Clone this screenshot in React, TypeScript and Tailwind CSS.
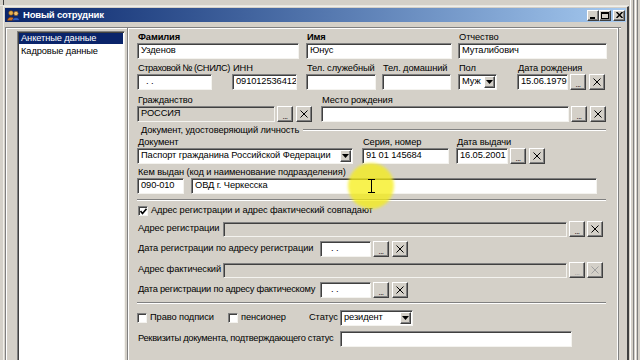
import React from "react";

const sunken =
  "border border-t-[#808080] border-l-[#808080] border-b-[#f4f3ef] border-r-[#f4f3ef] shadow-[inset_1px_1px_0_#404040]";
const raised =
  "border border-t-white border-l-white border-b-[#404040] border-r-[#404040] shadow-[inset_-1px_-1px_0_#808080] bg-[#d4d0c8]";

function Field({
  className,
  value,
  gray,
}: {
  className: string;
  value?: string;
  gray?: boolean;
}) {
  return (
    <div
      className={`${sunken} ${gray ? "bg-[#d4d0c8]" : "bg-white"} ${className} shrink-0 flex items-center pl-[3px] whitespace-nowrap overflow-hidden leading-none`}
    >
      {value}
    </div>
  );
}

function Btn({
  children,
  disabled,
}: {
  children: React.ReactNode;
  disabled?: boolean;
}) {
  return (
    <div
      className={`${raised} w-[16px] h-[16px] shrink-0 flex items-center justify-center leading-none ${disabled ? "text-[#a0a0a0]" : "text-black"}`}
    >
      {children}
    </div>
  );
}

function Dots({ disabled }: { disabled?: boolean }) {
  return (
    <Btn disabled={disabled}>
      <span className="text-[8px] mt-[5px] tracking-[-0.5px]">...</span>
    </Btn>
  );
}

function Cross({ disabled }: { disabled?: boolean }) {
  return (
    <Btn disabled={disabled}>
      <svg width="8" height="8" viewBox="0 0 8 8">
        <path
          d="M0.5 0.5 L7.5 7.5 M7.5 0.5 L0.5 7.5"
          stroke={disabled ? "#a0a0a0" : "#000"}
          strokeWidth="1"
        />
      </svg>
    </Btn>
  );
}

function Pick({ disabled }: { disabled?: boolean }) {
  return (
    <div className="flex">
      <div className="ml-[2px]">
        <Dots disabled={disabled} />
      </div>
      <div className="ml-[3px]">
        <Cross disabled={disabled} />
      </div>
    </div>
  );
}

function Select({ className, value }: { className: string; value: string }) {
  return (
    <div
      className={`${sunken} bg-white ${className} shrink-0 flex items-center justify-between pl-[3px] pr-[1px] whitespace-nowrap overflow-hidden leading-none`}
    >
      <span>{value}</span>
      <div className={`${raised} w-[11px] h-[12px] shrink-0 flex items-center justify-center`}>
        <svg width="7" height="4" viewBox="0 0 7 4">
          <path d="M0 0 H7 L3.5 4 Z" fill="#000" />
        </svg>
      </div>
    </div>
  );
}

function Check({ on }: { on?: boolean }) {
  return (
    <div className={`${sunken} bg-white w-[10px] h-[10px] shrink-0 flex items-center justify-center`}>
      {on && (
        <svg width="7" height="7" viewBox="0 0 7 7">
          <path d="M0.5 3 L2.5 5.5 L6.5 0.8" stroke="#000" strokeWidth="1.6" fill="none" />
        </svg>
      )}
    </div>
  );
}

function Label({
  children,
  bold,
  className,
}: {
  children: React.ReactNode;
  bold?: boolean;
  className?: string;
}) {
  return (
    <div className={`h-[12px] leading-[12px] whitespace-nowrap pl-[1px] ${bold ? "font-bold" : ""} ${className ?? ""}`}>
      {children}
    </div>
  );
}

function Etched({ className }: { className: string }) {
  return <div className={`h-[2px] shrink-0 border-t border-t-[#808080] border-b border-b-white ${className}`} />;
}

function TitleIcon() {
  return (
    <svg width="13" height="11" viewBox="0 0 13 11">
      <circle cx="4" cy="3" r="2.3" fill="#e8b048" stroke="#7a4a10" strokeWidth="0.6" />
      <path d="M0.5 10.5 C0.5 6 7.5 6 7.5 10.5 Z" fill="#d07020" stroke="#6a3a10" strokeWidth="0.6" />
      <circle cx="9" cy="3.5" r="2.2" fill="#f0c070" stroke="#7a4a10" strokeWidth="0.6" />
      <path d="M5.5 10.5 C5.5 6.5 12.5 6.5 12.5 10.5 Z" fill="#3060c0" stroke="#102060" strokeWidth="0.6" />
    </svg>
  );
}

function CapButton({ children, className }: { children: React.ReactNode; className?: string }) {
  return (
    <div className={`${raised} w-[12px] h-[11px] flex items-center justify-center ${className ?? ""}`}>
      {children}
    </div>
  );
}

export default function App() {
  return (
    <div className="w-[640px] h-[360px] bg-[#d4d0c8] overflow-hidden relative flex font-['Liberation_Sans',Arial,sans-serif] text-[9.3px] tracking-[-0.1px] text-black">
      <div className="w-[629px] h-[360px] flex flex-col overflow-hidden">
        <div className="h-[6px] shrink-0 border-b border-b-[#e8e6e0] flex">
          <div className="ml-[3px] w-[1px] bg-[#404040]" />
        </div>
        <div className="flex-1 min-h-0 ml-[3px] border-l border-l-[#f0efea] border-t border-t-[#f0efea] border-r-2 border-r-[#404040] px-[1px] pt-[1px] flex flex-col">
          {/* title bar */}
          <div className="h-[14px] shrink-0 bg-gradient-to-r from-[#0a246a] to-[#a6caf0] flex items-center pl-[2px] pr-[1px]">
            <TitleIcon />
            <div className="ml-[3px] text-white font-bold text-[9.5px] tracking-[-0.2px] leading-none">Новый сотрудник</div>
            <div className="ml-auto flex">
              <CapButton>
                <div className="w-[5px] h-[2px] bg-black mt-[5px] mr-[1px]" />
              </CapButton>
              <CapButton>
                <div className="w-[8px] h-[7px] border border-black border-t-2" />
              </CapButton>
              <CapButton className="ml-[2px]">
                <svg width="7" height="6" viewBox="0 0 7 6">
                  <path d="M0.5 0 L6.5 6 M6.5 0 L0.5 6" stroke="#000" strokeWidth="1.5" />
                </svg>
              </CapButton>
            </div>
          </div>

          {/* body */}
          <div className="mt-[5px] flex-1 min-h-0 mr-[5px] border-l border-t border-l-[#808080] border-t-[#808080] shadow-[inset_1px_1px_0_#fff] flex">
            {/* left list */}
            <div className="w-[121px] shrink-0 pl-[11px] pt-[3px] flex">
              <div className="w-[108px] bg-white border border-b-0 border-t-[#808080] border-l-[#808080] border-r-[#f4f3ef] shadow-[inset_1px_1px_0_#404040] pl-[1px] pt-[1px]">
                <div className="h-[11px] mr-[1px] bg-[#0a246a] text-white leading-[11px] pl-[2px] whitespace-nowrap">
                  Анкетные данные
                </div>
                <div className="h-[13px] leading-[13px] pl-[2px] mt-[1px] whitespace-nowrap">Кадровые данные</div>
              </div>
            </div>

            {/* right panel */}
            <div className="w-[492px] shrink-0 border-l border-l-[#808080] border-r border-r-[#808080] shadow-[inset_1px_0_0_#fff,inset_-1px_0_0_#fff] pl-[9px] flex flex-col">
              {/* row 1 */}
              <div className="flex mt-[3px]">
                <div className="w-[162px] flex flex-col">
                  <Label bold>Фамилия</Label>
                  <Field className="w-[162px] h-[16px]" value="Узденов" />
                </div>
                <div className="ml-[7px] w-[146px] flex flex-col">
                  <Label bold>Имя</Label>
                  <Field className="w-[146px] h-[16px]" value="Юнус" />
                </div>
                <div className="ml-[6px] w-[149px] flex flex-col">
                  <Label>Отчество</Label>
                  <Field className="w-[149px] h-[16px]" value="Муталибович" />
                </div>
              </div>

              {/* row 2 */}
              <div className="flex mt-[3px] items-end">
                <div className="w-[75px] flex flex-col">
                  <Label className="tracking-[-0.45px]">Страховой № (СНИЛС)</Label>
                  <Field className="w-[75px] h-[16px] pl-[8px]" value=" .  . " />
                </div>
                <div className="ml-[20px] w-[65px] flex flex-col">
                  <Label>ИНН</Label>
                  <Field className="w-[65px] h-[16px]" value="091012536412" />
                </div>
                <div className="ml-[9px] w-[70px] flex flex-col">
                  <Label>Тел. служебный</Label>
                  <Field className="w-[70px] h-[16px]" value="" />
                </div>
                <div className="ml-[6px] w-[69px] flex flex-col">
                  <Label>Тел. домашний</Label>
                  <Field className="w-[69px] h-[16px]" value="" />
                </div>
                <div className="ml-[7px] w-[39px] flex flex-col">
                  <Label>Пол</Label>
                  <Select className="w-[39px] h-[16px]" value="Муж" />
                </div>
                <div className="ml-[20px] flex flex-col">
                  <Label>Дата рождения</Label>
                  <div className="flex">
                    <Field className="w-[51px] h-[16px]" value="15.06.1979" />
                    <Pick />
                  </div>
                </div>
              </div>

              {/* row 3 */}
              <div className="flex mt-[4px] items-end">
                <div className="flex flex-col">
                  <Label>Гражданство</Label>
                  <div className="flex">
                    <Field className="w-[138px] h-[16px]" value="РОССИЯ" gray />
                    <Pick />
                  </div>
                </div>
                <div className="ml-[9px] flex flex-col">
                  <Label>Место рождения</Label>
                  <div className="flex">
                    <Field className="w-[248px] h-[16px]" value="" />
                    <Pick />
                  </div>
                </div>
              </div>

              {/* group caption */}
              <div className="flex items-center mt-[2px] h-[12px] shrink-0 pl-[4px] w-[469px]">
                <span className="whitespace-nowrap leading-[12px]">Документ, удостоверяющий личность</span>
                <Etched className="flex-1 ml-[4px]" />
              </div>

              {/* row 5 */}
              <div className="flex items-end">
                <div className="w-[216px] flex flex-col">
                  <Label>Документ</Label>
                  <Select className="w-[216px] h-[16px]" value="Паспорт гражданина Российской Федерации" />
                </div>
                <div className="ml-[9px] w-[87px] flex flex-col">
                  <Label>Серия, номер</Label>
                  <Field className="w-[87px] h-[16px]" value="91 01 145684" />
                </div>
                <div className="ml-[7px] flex flex-col">
                  <Label>Дата выдачи</Label>
                  <div className="flex">
                    <Field className="w-[52px] h-[16px]" value="16.05.2001" />
                    <Pick />
                  </div>
                </div>
              </div>

              {/* row 6 */}
              <div className="flex flex-col mt-[2px]">
                <Label>Кем выдан (код и наименование подразделения)</Label>
                <div className="flex">
                  <Field className="w-[47px] h-[16px]" value="090-010" />
                  <Field className="ml-[7px] w-[406px] h-[16px]" value="ОВД г. Черкесска" />
                </div>
              </div>

              <Etched className="w-[469px] mt-[5px]" />

              {/* checkbox */}
              <div className="flex items-center mt-[5px] h-[10px] shrink-0">
                <div className="ml-[1px]">
                  <Check on />
                </div>
                <span className="ml-[3px] whitespace-nowrap">Адрес регистрации и адрес фактический совпадают</span>
              </div>

              {/* address reg */}
              <div className="flex items-center mt-[5px]">
                <div className="w-[86px] whitespace-nowrap pl-[1px]">Адрес регистрации</div>
                <Field className="w-[344px] h-[15px]" value="" gray />
                <div className="flex ml-[2px]">
                  <Dots />
                  <div className="ml-[2px]">
                    <Cross />
                  </div>
                </div>
              </div>

              <div className="flex items-center mt-[4px]">
                <div className="w-[183px] whitespace-nowrap pl-[1px]">Дата регистрации по адресу регистрации</div>
                <Field className="w-[51px] h-[16px] pl-[10px]" value=" .  ." />
                <Pick />
              </div>

              <div className="flex items-center mt-[5px]">
                <div className="w-[86px] whitespace-nowrap pl-[1px]">Адрес фактический</div>
                <Field className="w-[344px] h-[15px]" value="" gray />
                <div className="flex ml-[2px]">
                  <Dots disabled />
                  <div className="ml-[2px]">
                    <Cross disabled />
                  </div>
                </div>
              </div>

              <div className="flex items-center mt-[4px]">
                <div className="w-[183px] whitespace-nowrap pl-[1px] tracking-[-0.25px]">Дата регистрации по адресу фактическому</div>
                <Field className="w-[51px] h-[16px] pl-[10px]" value=" .  ." />
                <Pick />
              </div>

              <Etched className="w-[469px] mt-[4px]" />

              <div className="flex items-center mt-[6px] h-[16px] shrink-0">
                <Check />
                <span className="ml-[3px] w-[78px] whitespace-nowrap">Право подписи</span>
                <Check />
                <span className="ml-[3px] w-[68px] whitespace-nowrap">пенсионер</span>
                <span className="w-[31px] whitespace-nowrap">Статус</span>
                <Select className="w-[73px] h-[16px]" value="резидент" />
              </div>

              <div className="flex items-center mt-[5px]">
                <div className="w-[203px] whitespace-nowrap pl-[1px] tracking-[-0.3px]">Реквизиты документа, подтверждающего статус</div>
                <Field className="w-[232px] h-[16px]" value="" />
              </div>
            </div>
          </div>
        </div>
      </div>

      {/* right edge of the outer window */}
      <div className="w-[11px] flex">
        <div className="w-[1px] ml-[1px] bg-white" />
        <div className="w-[1px] ml-[2px] bg-[#808080]" />
        <div className="w-[1px] ml-[1px] bg-white" />
        <div className="w-[1px] ml-[1px] bg-[#808080]" />
      </div>

      {/* cursor highlight */}
      <div className="absolute left-[348px] top-[163px] w-[46px] h-[46px] rounded-full bg-[rgba(245,238,20,0.75)] blur-[1.5px]" />
      <svg className="absolute left-[367px] top-[179px]" width="9" height="14" viewBox="0 0 9 14">
        <path d="M1 0.5 H8 M4.5 0.5 V13.5 M1 13.5 H8" stroke="#000" strokeWidth="1" />
      </svg>
    </div>
  );
}
